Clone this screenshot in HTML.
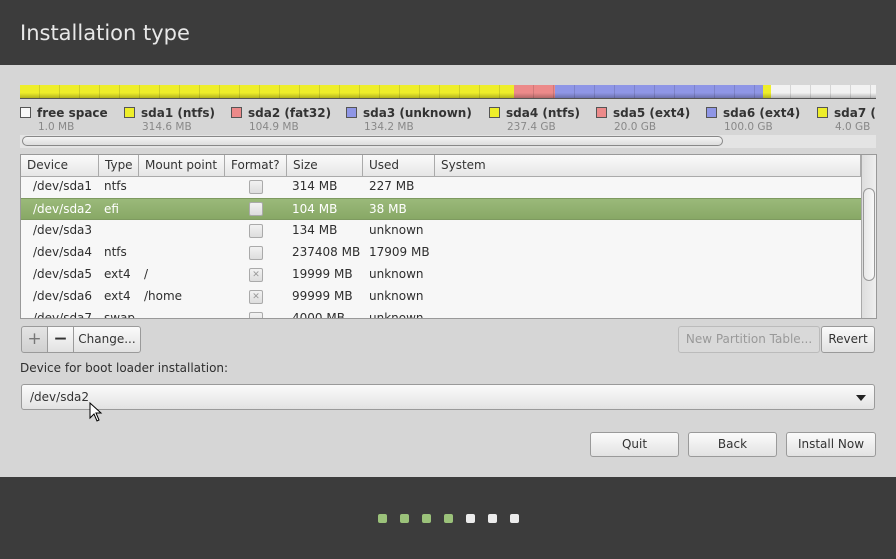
<!DOCTYPE html>
<html><head><meta charset="utf-8"><style>
*{box-sizing:border-box;margin:0;padding:0}
body{width:896px;height:559px;overflow:hidden;background:#d6d6d6;font-family:"DejaVu Sans","Liberation Sans",sans-serif;font-size:12px;color:#2e2e2e;position:relative}
.a{position:absolute}
.hdr{left:0;top:0;width:896px;height:65px;background:#3c3c3c}
.hdr span{position:absolute;left:20px;top:21px;font-size:21px;color:#e8e8e8}
.ftr{left:0;top:477px;width:896px;height:82px;background:#3c3c3c}
.dot{width:9px;height:9px;border-radius:2px;top:514px}
.bar{top:85px;height:14px;border-bottom:1px solid #555}
.seg{height:13px;background-image:repeating-linear-gradient(90deg,transparent 0 19px,rgba(0,0,0,.12) 19px 20px),linear-gradient(#fff0 0 60%,rgba(0,0,0,.25))}
.lgw{left:0;top:100px;width:876px;height:36px;overflow:hidden}
.lg{top:6px;font-weight:bold;font-size:12px;color:#333;white-space:nowrap}
.lg i{display:inline-block;width:11px;height:11px;border:1px solid #555;vertical-align:-1px;margin-right:6px}
.sz{top:21px;font-size:10.5px;color:#888}
.tbl{left:20px;top:154px;width:857px;height:165px;border:1px solid #999;background:#f7f7f7;overflow:hidden}
.th{position:absolute;top:0;height:22px;line-height:21px;padding-left:6px;background:linear-gradient(#fafafa,#e6e6e6);border-right:1px solid #aaa;border-bottom:1px solid #aaa;color:#333}
.row{position:absolute;left:0;width:840px;height:22px;line-height:21px}
.row span{position:absolute}
.cb{position:absolute;left:228px;top:4px;width:14px;height:14px;border:1px solid #aaa;border-radius:2px;background:linear-gradient(#f2f2f2,#ddd)}
.btn{position:absolute;height:27px;border:1px solid #9a9a9a;border-radius:3px;background:linear-gradient(#fbfbfb,#e2e2e2);text-align:center;line-height:25px;color:#333}
</style></head><body>
<div class="a hdr"><span>Installation type</span></div>

<div class="a bar" style="left:20px;width:856px">
<div class="a seg" style="left:0;width:494px;background-color:#eeee2a"></div>
<div class="a seg" style="left:494px;width:41px;background-color:#ec8a8a"></div>
<div class="a seg" style="left:535px;width:208px;background-color:#8f96e6"></div>
<div class="a seg" style="left:743px;width:8px;background-color:#eeee2a"></div>
<div class="a seg" style="left:751px;width:105px;background-color:#f2f2f2"></div>
</div>

<div class="a lgw">
<div class="a lg" style="left:20px"><i style="background:#f7f7f7"></i>free space</div>
<div class="a sz" style="left:38px">1.0 MB</div>
<div class="a lg" style="left:124px"><i style="background:#eeee2a"></i>sda1 (ntfs)</div>
<div class="a sz" style="left:142px">314.6 MB</div>
<div class="a lg" style="left:231px"><i style="background:#ec8a8a"></i>sda2 (fat32)</div>
<div class="a sz" style="left:249px">104.9 MB</div>
<div class="a lg" style="left:346px"><i style="background:#8f96e6"></i>sda3 (unknown)</div>
<div class="a sz" style="left:364px">134.2 MB</div>
<div class="a lg" style="left:489px"><i style="background:#eeee2a"></i>sda4 (ntfs)</div>
<div class="a sz" style="left:507px">237.4 GB</div>
<div class="a lg" style="left:596px"><i style="background:#ec8a8a"></i>sda5 (ext4)</div>
<div class="a sz" style="left:614px">20.0 GB</div>
<div class="a lg" style="left:706px"><i style="background:#8f96e6"></i>sda6 (ext4)</div>
<div class="a sz" style="left:724px">100.0 GB</div>
<div class="a lg" style="left:817px"><i style="background:#eeee2a"></i>sda7 (linux-swap)</div>
<div class="a sz" style="left:835px">4.0 GB</div>
</div>

<div class="a" style="left:20px;top:135px;width:856px;height:13px;background:#e4e4e4"></div>
<div class="a" style="left:22px;top:136px;width:701px;height:10px;border:1px solid #888;border-radius:5px;background:linear-gradient(#f4f4f4,#ddd)"></div>

<div class="a tbl">
<div class="th" style="left:0;width:78px">Device</div>
<div class="th" style="left:78px;width:40px">Type</div>
<div class="th" style="left:118px;width:86px">Mount point</div>
<div class="th" style="left:204px;width:62px">Format?</div>
<div class="th" style="left:266px;width:76px">Size</div>
<div class="th" style="left:342px;width:72px">Used</div>
<div class="th" style="left:414px;width:426px">System</div>
<div class="a" style="left:840px;top:0;width:16px;height:165px;background:linear-gradient(90deg,#ddd,#f0f0f0);border-left:1px solid #aaa"></div>
<div class="a" style="left:842px;top:33px;width:12px;height:93px;border:1px solid #999;border-radius:6px;background:linear-gradient(90deg,#e8e8e8,#f8f8f8)"></div>

<div class="row" style="top:21px"><span style="left:12px">/dev/sda1</span><span style="left:83px">ntfs</span><i class="cb"></i><span style="left:271px">314 MB</span><span style="left:348px">227 MB</span></div>
<div class="row" style="top:43px;background:linear-gradient(#9ab97a,#88a866);color:#fff;border-top:1px solid #7e9a60;border-bottom:1px solid #7e9a60"><span style="left:12px">/dev/sda2</span><span style="left:83px">efi</span><i class="cb" style="top:3px"></i><span style="left:271px">104 MB</span><span style="left:348px">38 MB</span></div>
<div class="row" style="top:65px"><span style="left:12px">/dev/sda3</span><i class="cb"></i><span style="left:271px">134 MB</span><span style="left:348px">unknown</span></div>
<div class="row" style="top:87px"><span style="left:12px">/dev/sda4</span><span style="left:83px">ntfs</span><i class="cb"></i><span style="left:271px">237408 MB</span><span style="left:348px">17909 MB</span></div>
<div class="row" style="top:109px"><span style="left:12px">/dev/sda5</span><span style="left:83px">ext4</span><span style="left:123px">/</span><i class="cb" style="color:#999;font-size:9px;line-height:12px;text-align:center;font-style:normal">✕</i><span style="left:271px">19999 MB</span><span style="left:348px">unknown</span></div>
<div class="row" style="top:131px"><span style="left:12px">/dev/sda6</span><span style="left:83px">ext4</span><span style="left:123px">/home</span><i class="cb" style="color:#999;font-size:9px;line-height:12px;text-align:center;font-style:normal">✕</i><span style="left:271px">99999 MB</span><span style="left:348px">unknown</span></div>
<div class="row" style="top:153px"><span style="left:12px">/dev/sda7</span><span style="left:83px">swap</span><i class="cb"></i><span style="left:271px">4000 MB</span><span style="left:348px">unknown</span></div>
</div>

<div class="btn" style="left:21px;top:326px;width:27px;background:linear-gradient(#e4e4e4,#d0d0d0);font-size:17px;color:#777;border-radius:3px 0 0 3px">+</div>
<div class="btn" style="left:47px;top:326px;width:27px;font-size:17px;border-radius:0;font-weight:bold">−</div>
<div class="btn" style="left:73px;top:326px;width:68px;border-radius:0 3px 3px 0">Change...</div>
<div class="btn" style="left:678px;top:326px;width:142px;color:#999;background:#d9d9d9;border-color:#bbb">New Partition Table...</div>
<div class="btn" style="left:821px;top:326px;width:54px">Revert</div>

<div class="a" style="left:20px;top:361px">Device for boot loader installation:</div>
<div class="btn" style="left:21px;top:384px;width:854px;height:26px;text-align:left;padding-left:8px;line-height:24px">/dev/sda2</div>
<div class="a" style="left:856px;top:395px;width:0;height:0;border-left:5px solid transparent;border-right:5px solid transparent;border-top:6px solid #222"></div>
<svg class="a" style="left:89px;top:402px" width="14" height="20" viewBox="0 0 14 20"><path d="M1 1 L1 16 L5 12 L8 19 L10 18 L7 11 L12 11 Z" fill="#fff" stroke="#000" stroke-width="1"/></svg>

<div class="btn" style="left:590px;top:432px;width:89px;height:25px;line-height:23px">Quit</div>
<div class="btn" style="left:688px;top:432px;width:89px;height:25px;line-height:23px">Back</div>
<div class="btn" style="left:786px;top:432px;width:90px;height:25px;line-height:23px">Install Now</div>

<div class="a ftr"></div>
<div class="a dot" style="left:378px;background:#9bc27a"></div>
<div class="a dot" style="left:400px;background:#9bc27a"></div>
<div class="a dot" style="left:422px;background:#9bc27a"></div>
<div class="a dot" style="left:444px;background:#9bc27a"></div>
<div class="a dot" style="left:466px;background:#ececec"></div>
<div class="a dot" style="left:488px;background:#ececec"></div>
<div class="a dot" style="left:510px;background:#ececec"></div>
</body></html>
